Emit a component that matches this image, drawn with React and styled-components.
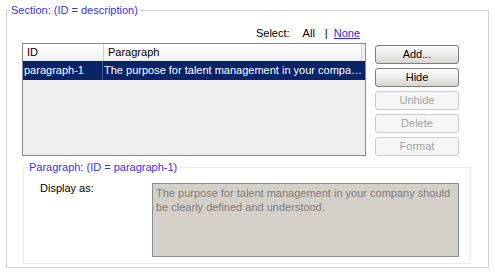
import styled, { createGlobalStyle } from 'styled-components';

const GlobalStyle = createGlobalStyle`
  html, body {
    margin: 0;
    padding: 0;
    background: #ffffff;
  }
  body {
    font-family: "Liberation Sans", Arial, sans-serif;
    font-size: 11px;
    color: #000000;
  }
`;

const Section = styled.fieldset`
  box-sizing: border-box;
  width: 483px;
  margin: 4px 0 0 6px;
  padding: 0 0 3px 0;
  border: 1px solid #d3d3d3;
  min-inline-size: 0;
`;

const Legend = styled.legend`
  padding: 0 2px;
  margin-left: ${(p) => p.$offset}px;
  font-size: 11px;
  line-height: 13px;
  color: #3434f2;
`;

const SectionBody = styled.div`
  padding: 10px 0 0 15px;
`;

const TopRow = styled.div`
  display: flex;
  align-items: flex-start;
  gap: 9px;
`;

const ListColumn = styled.div`
  display: flex;
  flex-direction: column;
  width: 344px;
`;

const SelectRow = styled.div`
  display: flex;
  justify-content: flex-end;
  align-items: center;
  height: 13px;
  line-height: 13px;
  padding-right: 6px;
  margin-bottom: 3px;
`;

const SelectItem = styled.span`
  margin-left: ${(p) => p.$gap || 0}px;
`;

const NoneLink = styled.a`
  margin-left: 6px;
  color: #2a2ae8;
  text-decoration: underline;
  cursor: pointer;
`;

const Table = styled.div`
  box-sizing: border-box;
  height: 113px;
  border: 1px solid #8a8a8a;
  background: #efefef;
  display: flex;
  flex-direction: column;
  overflow: hidden;
`;

const HeaderRow = styled.div`
  display: grid;
  grid-template-columns: 81px 1fr;
  height: 16px;
  margin-right: 3px;
  background: linear-gradient(#ffffff, #f1f1f1);
  border-bottom: 1px solid #e2e2e2;
  border-right: 1px solid #d6d6d6;
`;

const HeaderCell = styled.div`
  padding-left: 4px;
  line-height: 16px;
  border-right: ${(p) => (p.$last ? 'none' : '1px solid #d0d0d0')};
  color: #000000;
`;

const BodyRow = styled.div`
  display: grid;
  grid-template-columns: 80px minmax(0, 1fr);
  height: 19px;
  background: ${(p) => (p.$selected ? '#0a246a' : 'transparent')};
  color: ${(p) => (p.$selected ? '#ffffff' : '#000000')};
`;

const BodyCell = styled.div`
  min-width: 0;
  padding: 0 1px 0 1px;
  line-height: 19px;
  font-size: 11px;
  white-space: nowrap;
  overflow: hidden;
  text-overflow: ellipsis;
  border-right: ${(p) => (p.$last ? 'none' : '1px solid #3c5190')};
`;

const ButtonColumn = styled.div`
  display: flex;
  flex-direction: column;
  gap: 4px;
  padding-top: 18px;
`;

const ActionButton = styled.button`
  box-sizing: border-box;
  width: 84px;
  height: 19px;
  padding: 0;
  font-family: "Liberation Sans", Arial, sans-serif;
  font-size: 11px;
  line-height: 17px;
  border-radius: 3px;
  border: 1px solid ${(p) => (p.disabled ? '#cbcbcb' : '#7d7d7d')};
  background: ${(p) =>
    p.disabled ? '#f5f5f5' : 'linear-gradient(#fdfdfd, #ebeae6 55%, #d8d5cd)'};
  color: ${(p) => (p.disabled ? '#a3a3a3' : '#000000')};
`;

const ParagraphBox = styled.fieldset`
  box-sizing: border-box;
  width: 448px;
  margin: 5px 0 0 1px;
  padding: 0;
  border: 1px solid #ebebeb;
  min-inline-size: 0;
`;

const FieldRow = styled.div`
  display: flex;
  align-items: flex-start;
  padding: 8px 11px 6px 16px;
`;

const FieldLabel = styled.div`
  width: 112px;
  line-height: 13px;
  font-size: 11px;
`;

const DisplayArea = styled.div`
  box-sizing: border-box;
  width: 307px;
  height: 74px;
  margin-top: 1px;
  padding: 2px 3px;
  border: 1px solid #8c8c94;
  background: #d4d0c8;
  color: #7c7c7c;
  font-size: 11px;
  line-height: 14px;
`;

export default function App() {
  return (
    <>
      <GlobalStyle />
      <Section>
        <Legend $offset={2}>Section: (ID = description)</Legend>
        <SectionBody>
          <TopRow>
            <ListColumn>
              <SelectRow>
                <SelectItem>Select:</SelectItem>
                <SelectItem $gap={13}>All</SelectItem>
                <SelectItem $gap={10}>|</SelectItem>
                <NoneLink>None</NoneLink>
              </SelectRow>
              <Table>
                <HeaderRow>
                  <HeaderCell>ID</HeaderCell>
                  <HeaderCell $last>Paragraph</HeaderCell>
                </HeaderRow>
                <BodyRow $selected>
                  <BodyCell>paragraph-1</BodyCell>
                  <BodyCell $last>
                    The purpose for talent management in your company should be clearly defined and understood.
                  </BodyCell>
                </BodyRow>
              </Table>
            </ListColumn>
            <ButtonColumn>
              <ActionButton>Add...</ActionButton>
              <ActionButton>Hide</ActionButton>
              <ActionButton disabled>Unhide</ActionButton>
              <ActionButton disabled>Delete</ActionButton>
              <ActionButton disabled>Format</ActionButton>
            </ButtonColumn>
          </TopRow>
          <ParagraphBox>
            <Legend $offset={3}>Paragraph: (ID = paragraph-1)</Legend>
            <FieldRow>
              <FieldLabel>Display as:</FieldLabel>
              <DisplayArea>
                The purpose for talent management in your company should be clearly defined and understood.
              </DisplayArea>
            </FieldRow>
          </ParagraphBox>
        </SectionBody>
      </Section>
    </>
  );
}
